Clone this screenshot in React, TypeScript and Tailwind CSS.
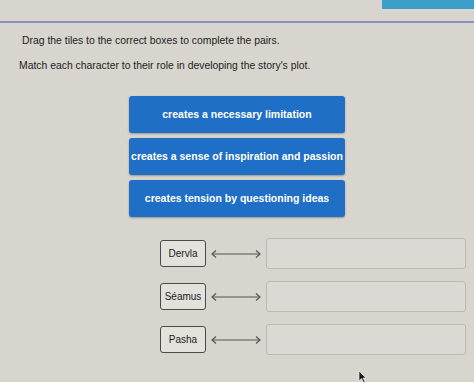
export default function App() {
  const tiles = [
    'creates a necessary limitation',
    'creates a sense of inspiration and passion',
    'creates tension by questioning ideas',
  ];
  const names = ['Dervla', 'Séamus', 'Pasha'];

  return (
    <div className="relative w-[474px] h-[382px] overflow-hidden bg-[#d8d5cf] font-['Liberation_Sans',Arial,sans-serif] text-[#222]">
      {/* header strip */}
      <div className="flex justify-end h-[9px]">
        <div className="w-[92px] h-full bg-[#3c9fc9]" />
      </div>
      <div className="mt-[12px] h-[2px] bg-[#8a8fc8]" />

      <p className="mt-[12px] pl-[22px] text-[10.4px] leading-[12px]">
        Drag the tiles to the correct boxes to complete the pairs.
      </p>
      <p className="mt-[13px] pl-[19px] text-[10.4px] leading-[12px]">
        Match each character to their role in developing the story's plot.
      </p>

      {/* answer tiles */}
      <div className="mt-[24px] flex flex-col gap-[5px] pl-[129px]">
        {tiles.map((t) => (
          <div
            key={t}
            className="w-[216px] h-[37px] flex items-center justify-center rounded-[3px] bg-[#1f6fc6] shadow-[0_1px_2px_rgba(0,0,0,0.3)] text-white text-[10.5px] font-bold whitespace-nowrap"
          >
            {t}
          </div>
        ))}
      </div>

      {/* pairs */}
      <div className="mt-[21px] flex flex-col gap-[12px] pl-[160px]">
        {names.map((n) => (
          <div key={n} className="flex items-center">
            <div className="w-[46px] h-[27px] flex items-center justify-center rounded-[3px] border-[1.5px] border-[#4a4a4a] bg-[#e3e1dc] text-[10px]">
              {n}
            </div>
            <svg width="52" height="10" viewBox="0 0 52 10" className="mx-[4px]" fill="none" stroke="#555" strokeWidth="1.2">
              <line x1="2" y1="5" x2="50" y2="5" />
              <polyline points="6,1.5 2,5 6,8.5" />
              <polyline points="46,1.5 50,5 46,8.5" />
            </svg>
            <div className="w-[200px] h-[31px] rounded-[3px] border border-[#bcb9b3] bg-[#dcd9d4]" />
          </div>
        ))}
      </div>

      {/* mouse cursor */}
      <svg width="9" height="13" viewBox="0 0 9 13" className="absolute left-[358px] top-[370px]">
        <path d="M1 1 L1 11 L3.5 8.5 L5.5 12.5 L7 11.8 L5 8 L8 8 Z" fill="#1a1a1a" stroke="#fff" strokeWidth="0.6" />
      </svg>
    </div>
  );
}
